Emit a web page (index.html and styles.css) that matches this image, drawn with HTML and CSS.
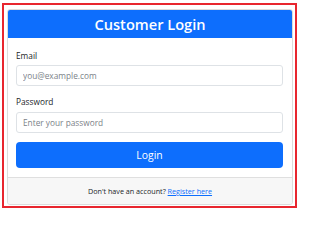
FILE: index.html
```html
<!DOCTYPE html>
<html lang="en">
<head>
<meta charset="utf-8">
<title>Customer Login</title>
<link rel="stylesheet" href="styles.css">
</head>
<body>
<div class="frame">
  <div class="card">
    <div class="card-header">
      <h3 class="title">Customer Login</h3>
    </div>
    <form class="card-body">
      <div class="group">
        <label class="label" for="email">Email</label>
        <input class="input" id="email" type="email" placeholder="you@example.com">
      </div>
      <div class="group group-pw">
        <label class="label" for="pw">Password</label>
        <input class="input" id="pw" type="password" placeholder="Enter your password">
      </div>
      <button class="btn" type="button">Login</button>
    </form>
    <div class="card-footer">
      <span>Don't have an account? <a class="link" href="#">Register here</a></span>
    </div>
  </div>
</div>
</body>
</html>
```
FILE: styles.css
```css
html, body {
  margin: 0;
  padding: 0;
  background: #ffffff;
}
body {
  width: 300px;
  height: 209px;
  overflow: hidden;
  font-family: "Open Sans", "Noto Sans", sans-serif;
  color: #212529;
}
.frame {
  box-sizing: border-box;
  margin: 3px 0 0 2px;
  width: 295px;
  height: 205px;
  border: 2px solid #e8262f;
  padding: 4px 2px 1px 3px;
}
.card {
  box-sizing: border-box;
  width: 286px;
  height: 196px;
  border: 1px solid #dcdcdc;
  border-radius: 3px;
  display: flex;
  flex-direction: column;
  overflow: hidden;
  background: #fff;
}
.card-header {
  height: 28px;
  background: #0d6efd;
  display: flex;
  align-items: center;
  justify-content: center;
}
.title {
  margin: 0;
  color: #fff;
  font-size: 14.6px;
  font-weight: 600;
  line-height: 1;
}
.card-body {
  margin: 0;
  padding: 11px 9px 9px 8px;
  display: flex;
  flex-direction: column;
}
.group {
  display: flex;
  flex-direction: column;
  gap: 3px;
}
.group-pw {
  margin-top: 9px;
  gap: 4px;
}
.label {
  font-size: 8.3px;
  line-height: 13px;
  height: 13px;
}
.input {
  box-sizing: border-box;
  height: 21px;
  margin: 0;
  border: 1px solid #dee2e6;
  border-radius: 3px;
  padding: 0 6px;
  font-family: "Open Sans", "Noto Sans", sans-serif;
  font-size: 8.3px;
  color: #212529;
  background: #fff;
}
.input::placeholder {
  color: #7b8288;
}
.btn {
  margin-top: 9px;
  height: 26px;
  border: 0;
  border-radius: 4px;
  background: #0d6efd;
  color: #fff;
  font-family: "Open Sans", "Noto Sans", sans-serif;
  font-size: 10.4px;
  padding: 0;
}
.card-footer {
  box-sizing: border-box;
  height: 27px;
  border-top: 1px solid #dfdfdf;
  background: #f7f7f7;
  display: flex;
  align-items: center;
  justify-content: center;
  font-size: 7.2px;
}
.link {
  color: #0d6efd;
  text-decoration: underline;
}
```
